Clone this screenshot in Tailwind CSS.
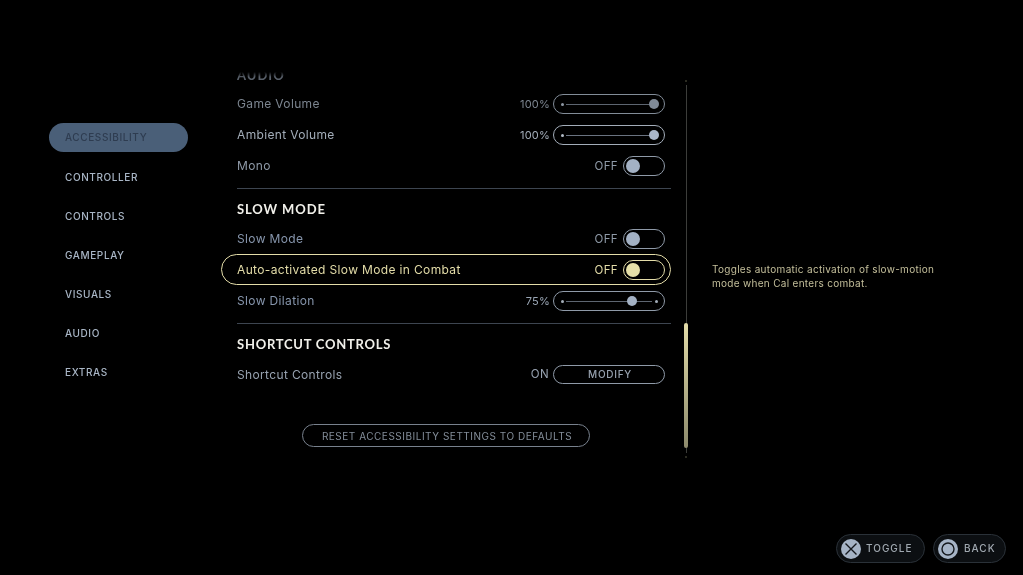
<!DOCTYPE html>
<html lang="en">
<head>
    <meta charset="UTF-8">
    <title>Accessibility Settings</title>
    <script src="https://cdn.jsdelivr.net/npm/@tailwindcss/browser@4"></script>
</head>
<body class="bg-black">
    <div class="w-[1023px] h-[575px] overflow-hidden bg-black flex flex-col font-['Inter','Liberation_Sans',sans-serif]">
        <div class="h-[534px] flex">
            <!-- Sidebar -->
            <nav class="w-[172px] ml-[49px] pt-[123px] text-[10px] font-medium tracking-[0.6px] text-[#a9b6c6] will-change-transform">
                <div class="w-[139px] h-[29px] rounded-full bg-[#4a5f78] text-[#2e3c50] flex items-center pl-[16px]">ACCESSIBILITY</div>
                <div class="w-[139px] h-[29px] mt-[10px] pt-[1px] flex items-center pl-[16px]">CONTROLLER</div>
                <div class="w-[139px] h-[29px] mt-[10px] pt-[2px] flex items-center pl-[16px]">CONTROLS</div>
                <div class="w-[139px] h-[29px] mt-[10px] pt-[2px] flex items-center pl-[16px]">GAMEPLAY</div>
                <div class="w-[139px] h-[29px] mt-[10px] pt-[2px] flex items-center pl-[16px]">VISUALS</div>
                <div class="w-[139px] h-[29px] mt-[10px] pt-[2px] flex items-center pl-[16px]">AUDIO</div>
                <div class="w-[139px] h-[29px] mt-[10px] pt-[2px] flex items-center pl-[16px]">EXTRAS</div>
            </nav>

            <!-- Settings list -->
            <main class="w-[450px] pt-[72px] text-[12px] tracking-[0.35px] will-change-transform">
                <div class="relative h-[16px] pl-[16px] overflow-hidden">
                    <div class="absolute left-[16px] bottom-[6px] font-['Lato',sans-serif] font-bold text-[13px] leading-[14px] tracking-[1px] text-[#59606a]">AUDIO</div>
                    <div class="absolute inset-x-0 top-0 h-[5px] bg-gradient-to-b from-black to-transparent"></div>
                </div>

                <div class="h-[31px] pl-[16px] pr-[6px] flex items-center text-[#7c8590]">
                    <span class="pt-[1px]">Game Volume</span>
                    <span class="ml-auto mr-[3px] pt-[1px] text-[11px] tracking-[0.2px]">100%</span>
                    <div class="relative w-[112px] h-[20px] rounded-full border border-[#828c98]">
                        <div class="absolute left-[7px] top-[8px] w-[3px] h-[3px] rounded-full bg-[#8e98a4]"></div>
                        <div class="absolute left-[12px] right-[10px] top-[9px] h-px bg-[#5d6570]"></div>
                        <div class="absolute left-[95px] top-[4.5px] w-[10px] h-[10px] rounded-full bg-[#808a97]"></div>
                    </div>
                </div>
                <div class="h-[31px] pl-[16px] pr-[6px] flex items-center text-[#a3adb9]">
                    <span class="pt-[1px]">Ambient Volume</span>
                    <span class="ml-auto mr-[3px] pt-[1px] text-[11px] tracking-[0.2px]">100%</span>
                    <div class="relative w-[112px] h-[20px] rounded-full border border-[#a3adb9]">
                        <div class="absolute left-[7px] top-[8px] w-[3px] h-[3px] rounded-full bg-[#b3bcc7]"></div>
                        <div class="absolute left-[12px] right-[10px] top-[9px] h-px bg-[#6a7380]"></div>
                        <div class="absolute left-[95px] top-[4.5px] w-[10px] h-[10px] rounded-full bg-[#a9b6c8]"></div>
                    </div>
                </div>
                <div class="h-[31px] pl-[16px] pr-[6px] flex items-center text-[#8f9aa8]">
                    <span class="pt-[1px]">Mono</span>
                    <span class="ml-auto mr-[5px] pt-[2px] text-[11.5px]">OFF</span>
                    <div class="w-[42px] h-[20px] rounded-full border border-[#8f9aa8] flex items-center pl-[2px]">
                        <div class="w-[14px] h-[14px] rounded-full bg-[#a3b1c4]"></div>
                    </div>
                </div>

                <div class="h-px mt-[7px] ml-[16px] bg-[#3d4550]"></div>
                <div class="h-[34px] pt-[8px] pl-[16px] flex items-center font-['Lato',sans-serif] font-bold text-[13px] tracking-[0.9px] text-[#f1f0ea]">SLOW MODE</div>

                <div class="h-[31px] pl-[16px] pr-[6px] flex items-center text-[#8796ad]">
                    <span class="pt-[1px]">Slow Mode</span>
                    <span class="ml-auto mr-[5px] pt-[2px] text-[11.5px] text-[#8f9aa8]">OFF</span>
                    <div class="w-[42px] h-[20px] rounded-full border border-[#8f9aa8] flex items-center pl-[2px]">
                        <div class="w-[14px] h-[14px] rounded-full bg-[#a3b1c4]"></div>
                    </div>
                </div>
                <div class="h-[31px] pl-[15px] pr-[5px] flex items-center rounded-full border-[1.5px] border-[#e3dca8] text-[#e3dca8]">
                    <span class="pt-[1px]">Auto-activated Slow Mode in Combat</span>
                    <span class="ml-auto mr-[5px] pt-[2px] text-[11.5px]">OFF</span>
                    <div class="w-[42px] h-[20px] rounded-full border border-[#e3dca8] flex items-center pl-[2px]">
                        <div class="w-[14px] h-[14px] rounded-full bg-[#e6e0a8]"></div>
                    </div>
                </div>
                <div class="h-[31px] pl-[16px] pr-[6px] flex items-center text-[#8796ad]">
                    <span class="pt-[1px]">Slow Dilation</span>
                    <span class="ml-auto mr-[3px] pt-[1px] text-[11px] tracking-[0.2px] text-[#9aa6b5]">75%</span>
                    <div class="relative w-[112px] h-[20px] rounded-full border border-[#8f9aa8]">
                        <div class="absolute left-[7px] top-[8px] w-[3px] h-[3px] rounded-full bg-[#a3adb9]"></div>
                        <div class="absolute left-[12px] right-[12px] top-[9px] h-px bg-[#5d6570]"></div>
                        <div class="absolute left-[101px] top-[8px] w-[3px] h-[3px] rounded-full bg-[#a3adb9]"></div>
                        <div class="absolute left-[73px] top-[4.5px] w-[10px] h-[10px] rounded-full bg-[#a3b1c4]"></div>
                    </div>
                </div>

                <div class="h-px mt-[7px] ml-[16px] bg-[#3d4550]"></div>
                <div class="h-[35px] pt-[7px] pl-[16px] flex items-center font-['Lato',sans-serif] font-bold text-[13px] tracking-[0.75px] text-[#f1f0ea]">SHORTCUT CONTROLS</div>

                <div class="h-[31px] pl-[16px] pr-[6px] flex items-center text-[#97a2b0]">
                    <span class="pt-[1px]">Shortcut Controls</span>
                    <span class="ml-auto mr-[4px] text-[11.5px]">ON</span>
                    <div class="w-[112px] h-[19px] rounded-full border border-[#8f9aa8] pl-[2px] flex items-center justify-center text-[10px] tracking-[0.7px] text-[#98a3b0] font-medium">MODIFY</div>
                </div>

                <div class="w-[288px] h-[23px] mt-[34px] ml-[81px] pt-[1px] pl-[2px] rounded-full border border-[#78818d] flex items-center justify-center text-[10px] tracking-[0.52px] text-[#848e9a]">RESET ACCESSIBILITY SETTINGS TO DEFAULTS</div>
            </main>

            <!-- Scrollbar -->
            <div class="relative w-[4px] h-[378px] mt-[80px] ml-[13px]">
                <div class="absolute left-[1px] top-0 w-[2px] h-[2px] rounded-full bg-[#3a3a2c]"></div>
                <div class="absolute left-[1.5px] top-[5px] bottom-[5px] w-px bg-[#3c3d3a]"></div>
                <div class="absolute left-[1px] bottom-0 w-[2px] h-[2px] rounded-full bg-[#3a3a2c]"></div>
                <div class="absolute left-0 top-[243px] w-[4px] h-[125px] rounded-full bg-gradient-to-b from-[#e3dca8] to-[#8d8a6c]"></div>
            </div>

            <!-- Description -->
            <aside class="w-[240px] ml-[24px] pt-[263px] text-[10px] leading-[13.5px] tracking-[0.3px] text-[#c4bf9b] will-change-transform">
                Toggles automatic activation of slow-motion<br>mode when Cal enters combat.
            </aside>
        </div>

        <!-- Button hints -->
        <footer class="flex justify-end gap-[8px] pr-[17px] text-[10px] font-medium tracking-[1px] text-[#a0a8b0] will-change-transform">
            <div class="w-[89px] h-[29px] rounded-full bg-[#0c0f12] border border-[#2a3138] flex items-center pl-[4px] gap-[5px]">
                <svg class="w-[20px] h-[20px]" viewBox="0 0 20 20">
                    <circle cx="10" cy="10" r="10" fill="#a6b4c6"/>
                    <path d="M4.5 4.5 15.5 15.5M15.5 4.5 4.5 15.5" stroke="#14181d" stroke-width="1.4"/>
                </svg>
                <span>TOGGLE</span>
            </div>
            <div class="w-[73px] h-[29px] rounded-full bg-[#0c0f12] border border-[#2a3138] flex items-center pl-[4px] gap-[6px]">
                <svg class="w-[20px] h-[20px]" viewBox="0 0 20 20">
                    <circle cx="10" cy="10" r="10" fill="#a6b4c6"/>
                    <circle cx="10" cy="10" r="6" fill="none" stroke="#14181d" stroke-width="1.4"/>
                </svg>
                <span>BACK</span>
            </div>
        </footer>
    </div>
</body>
</html>
